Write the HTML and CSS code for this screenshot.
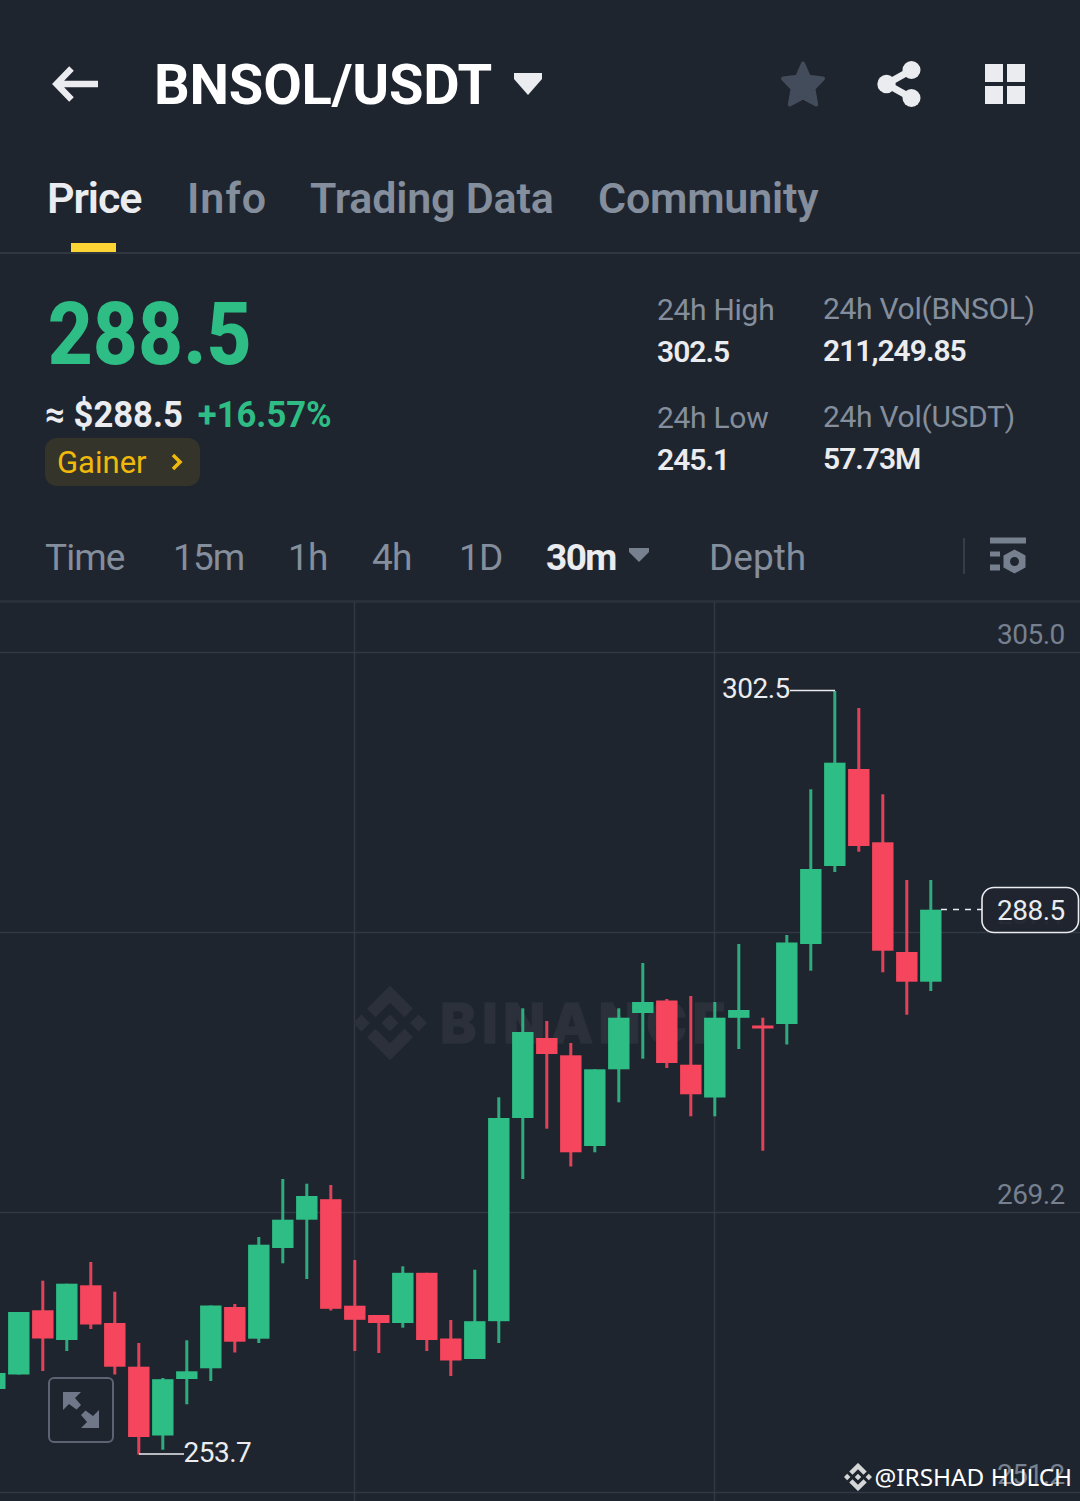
FILE: index.html
```html
<!DOCTYPE html>
<html lang="en">
<head>
    <meta charset="UTF-8">
    <meta name="viewport" content="width=device-width, initial-scale=1.0">
    <title>BNSOL/USDT</title>
    <link rel="stylesheet" href="styles.css">
</head>
<body>
    <header class="header">
        <svg class="back" width="46" height="36" viewBox="0 0 46 36">
            <path d="M19.5 2.5L4.5 18l15 15.5M4 18h42" fill="none" stroke="currentColor" stroke-width="6.4"/>
        </svg>
        <h1>BNSOL/USDT</h1>
        <svg class="caret" width="28" height="22" viewBox="0 0 28 22">
            <path d="M0 0h28v6L14 22 0 6z" fill="currentColor"/>
        </svg>
        <div class="header-icons">
            <svg class="star" width="46" height="48" viewBox="0 0 46 48">
                <path d="M23 3.500l5.800 13.200L43 18.600 33.400 28.600 36.200 44.500 23 37.500 9.800 44.500 12.600 28.600 3 18.600l14.200-1.900z" fill="currentColor" stroke="currentColor" stroke-width="4" stroke-linejoin="round"/>
            </svg>
            <svg width="44" height="46" viewBox="0 0 44 46">
                <path d="M34.500 9L9.500 23l25 14" fill="none" stroke="currentColor" stroke-width="7"/>
                <circle cx="34.500" cy="9" r="9" fill="currentColor"/>
                <circle cx="9.500" cy="23" r="9.200" fill="currentColor"/>
                <circle cx="34.500" cy="37" r="9" fill="currentColor"/>
            </svg>
            <svg width="40" height="40" viewBox="0 0 40 40">
                <path d="M0 0h18v18H0zM22 0h18v18H22zM0 22h18v18H0zM22 22h18v18H22z" fill="currentColor"/>
            </svg>
        </div>
    </header>

    <nav class="tabs">
        <a class="tab active">Price</a>
        <a class="tab info">Info</a>
        <a class="tab">Trading Data</a>
        <a class="tab">Community</a>
    </nav>

    <section class="summary">
        <div class="price-block">
            <div class="price">288.5</div>
            <div class="price-sub"><span>≈ $288.5</span><span class="change">+16.57%</span></div>
            <div class="badge">
                <span>Gainer</span>
                <svg width="12" height="18" viewBox="0 0 12 18">
                    <path d="M2 2l7 7-7 7" fill="none" stroke="currentColor" stroke-width="3.6"/>
                </svg>
            </div>
        </div>
        <div class="stats">
            <div class="stats-col">
                <div class="stat"><div class="label">24h High</div><div class="value">302.5</div></div>
                <div class="stat"><div class="label">24h Low</div><div class="value">245.1</div></div>
            </div>
            <div class="stats-col wide">
                <div class="stat"><div class="label">24h Vol(BNSOL)</div><div class="value">211,249.85</div></div>
                <div class="stat"><div class="label">24h Vol(USDT)</div><div class="value">57.73M</div></div>
            </div>
        </div>
    </section>

    <nav class="intervals">
        <span>Time</span>
        <span>15m</span>
        <span>1h</span>
        <span>4h</span>
        <span>1D</span>
        <span class="selected">30m
            <svg width="20" height="14" viewBox="0 0 20 14"><path d="M0 0h20v4l-10 10L0 4z" fill="currentColor"/></svg>
        </span>
        <span class="depth">Depth</span>
        <div class="divider"></div>
        <svg class="settings" width="36" height="37" viewBox="0 0 36 37">
            <path d="M0 .5h36v6H0zM0 14.500h10v5H0zM0 27.500h10v6H0z" fill="currentColor"/>
            <path fill-rule="evenodd" d="M24.500 12.500l11 6v12l-11 6-11-6v-12zM24.500 20a4.500 4.500 0 1 0 0 9 4.500 4.500 0 1 0 0-9z" fill="currentColor"/>
        </svg>
    </nav>

    <main class="chart">
        <svg class="chart-svg" width="1080" height="899" viewBox="0 602 1080 899">
            <g class="grid">
                <path d="M0 652.500h1080M0 932.500h1080M0 1212.500h1080M0 1492.500h1080M354.500 602v899M714.500 602v899"/>
            </g>

            <!-- watermark -->
            <g class="watermark">
                <g transform="translate(353 986) scale(.587)">
                    <path d="M38.200 53.200L63 28.400l24.800 24.800 14.400-14.400L63 -.4 23.800 38.800zM0 63l14.400-14.400L28.800 63 14.400 77.400zM38.200 72.800L63 97.600l24.800-24.800 14.400 14.400L63 126.400 23.800 87.200zM97.200 63l14.400-14.400L126 63l-14.400 14.400zM77.600 63L63 48.400 48.400 63 63 77.600z"/>
                </g>
                <text x="440" y="1043" textLength="286" lengthAdjust="spacing">BINANCE</text>
            </g>

            <g id="candles"></g>

            <g class="axis">
                <text x="997" y="644">305.0</text>
                <text x="997" y="924">287.1</text>
                <text x="997" y="1204">269.2</text>
                <text x="997" y="1484">251.2</text>
            </g>

            <g class="marks">
                <path d="M790 690.500h45M139 1454h45"/>
                <text x="722" y="698">302.5</text>
                <text x="183.500" y="1462">253.7</text>
            </g>

            <g class="last-price">
                <path d="M941 909.500h41" stroke-dasharray="6 6"/>
                <rect x="982" y="887.500" width="96.500" height="45" rx="12"/>
                <text x="997" y="920">288.5</text>
            </g>
        </svg>

        <button class="expand" aria-label="Expand">
            <svg width="36" height="36" viewBox="0 0 36 36">
                <path d="M0 0h18l-6 6 6 7-4.500 4.500L6 12l-6 6zM36 36H18l6-6-6-7 4.500-4.500L30 24l6-6z" fill="currentColor"/>
            </svg>
        </button>

        <div class="author">
            <svg width="28" height="28" viewBox="0 0 126 126">
                <path fill="currentColor" d="M38.200 53.200L63 28.400l24.800 24.800 14.400-14.400L63 -.4 23.800 38.800zM0 63l14.400-14.400L28.800 63 14.400 77.400zM38.200 72.800L63 97.600l24.800-24.800 14.400 14.400L63 126.400 23.800 87.200zM97.200 63l14.400-14.400L126 63l-14.400 14.400zM77.600 63L63 48.400 48.400 63 63 77.600z"/>
            </svg>
            <span>@IRSHAD HULCH</span>
        </div>
    </main>

    <script src="script.js"></script>
</body>
</html>
```
FILE: styles.css
```css
:root {
    --bg: #1f252f;
    --text: #eaecef;
    --muted: #848e9c;
    --line: #31373f;
    --green: #2ebd85;
    --red: #f6465d;
    --yellow: #fcd535;
}

* {
    margin: 0;
    padding: 0;
    box-sizing: border-box;
}

body {
    width: 1080px;
    font-family: Roboto, sans-serif;
    color: var(--text);
    background-color: var(--bg);
    overflow: hidden;
}

svg {
    display: block;
    flex: none;
}

/* header */
.header {
    display: flex;
    align-items: center;
    height: 170px;
    padding: 0 55px 2px 52px;
}

.header h1 {
    width: 394px;
    padding: 2px 0 0 56px;
    font-size: 56px;
    line-height: 60px;
    font-weight: 700;
    letter-spacing: -0.2px;
    white-space: nowrap;
    color: #fff;
}

.caret {
    margin-left: 22px;
}

.header-icons {
    display: flex;
    align-items: center;
    margin-left: auto;
}

.header-icons svg + svg {
    margin-left: 51px;
}

.header-icons svg:last-child {
    margin-left: 64px;
}

.star {
    color: #434c5a;
}

/* tabs */
.tabs {
    display: grid;
    grid-template-columns: 140px 123px 288px auto;
    height: 84px;
    padding-left: 47px;
    border-bottom: 2px solid var(--line);
}

.tab {
    position: relative;
    justify-self: start;
    font-size: 43px;
    line-height: 56px;
    font-weight: 600;
    letter-spacing: -0.2px;
    color: var(--muted);
}

.tab.info {
    letter-spacing: 1px;
}

.tab.active {
    letter-spacing: -1.1px;
    color: var(--text);
}

.tab.active::after {
    content: "";
    position: absolute;
    left: 24px;
    bottom: 0;
    width: 45px;
    height: 9px;
    background-color: var(--yellow);
}

/* summary */
.summary {
    display: flex;
    justify-content: space-between;
    height: 260px;
    padding: 34px 40px 0 45px;
}

.price {
    padding-left: 3px;
    font-size: 88px;
    line-height: 92px;
    font-weight: 800;
    color: var(--green);
    transform: scaleX(0.89);
    transform-origin: left;
}

.price-sub {
    display: flex;
    gap: 16px;
    margin-top: 12px;
    font-size: 37px;
    line-height: 46px;
    font-weight: 700;
    transform: scaleX(0.935);
    transform-origin: left;
    white-space: nowrap;
}

.change {
    color: var(--green);
}

.badge {
    display: flex;
    align-items: center;
    justify-content: space-between;
    width: 155px;
    height: 48px;
    padding: 0 17px 0 12px;
    border-radius: 12px;
    font-size: 31px;
    background-color: #35342b;
    color: #f0b90b;
}

.stats {
    display: flex;
    margin-top: 1px;
}

.stats-col {
    width: 166px;
}

.stats-col.wide {
    width: 217px;
    margin-top: -1px;
}

.stat {
    height: 108px;
    font-size: 30px;
    line-height: 42px;
    white-space: nowrap;
}

.label {
    color: var(--muted);
    letter-spacing: -0.3px;
}

.value {
    font-weight: 600;
    letter-spacing: -1px;
}

/* intervals */
.intervals {
    display: grid;
    grid-template-columns: 128px 115px 84px 87px 87px 163px 254px 27px 36px;
    align-items: center;
    height: 89px;
    padding: 1px 0 0 45px;
    border-bottom: 3px solid #29303a;
    font-size: 37px;
    letter-spacing: -0.9px;
    color: var(--muted);
}

.intervals .selected {
    display: flex;
    align-items: center;
    gap: 13px;
    font-weight: 700;
    letter-spacing: -1.6px;
    color: var(--text);
}

.intervals .depth {
    letter-spacing: 0;
}

.selected svg {
    margin-top: -6px;
    color: #76808f;
}

.divider {
    width: 2px;
    height: 36px;
    margin-top: -4px;
    background-color: #363d48;
}

.settings {
    margin-top: -4px;
    color: #76808f;
}

/* chart */
.chart {
    position: relative;
    height: 899px;
    margin-top: -1px;
}

.chart text {
    font-size: 28px;
    letter-spacing: -0.5px;
}

.grid path {
    fill: none;
    stroke: #323943;
    stroke-width: 1.5;
}

.watermark {
    fill: #2b303b;
}

.chart .watermark text {
    font-family: Inter, sans-serif;
    font-size: 55px;
    font-weight: 800;
    letter-spacing: 0;
    stroke: #2b303b;
    stroke-width: 1.5;
}

.up {
    fill: var(--green);
}

.down {
    fill: var(--red);
}

.wick {
    opacity: 0.9;
}

.axis {
    fill: #76808f;
}

.marks path,
.last-price path {
    fill: none;
    stroke: var(--text);
    stroke-width: 1.5;
}

.marks text,
.last-price text {
    fill: var(--text);
}

.last-price rect {
    fill: var(--bg);
    fill-opacity: 0.93;
    stroke: var(--text);
    stroke-width: 1.6;
}

.expand {
    position: absolute;
    left: 48px;
    top: 775px;
    display: flex;
    align-items: center;
    justify-content: center;
    width: 66px;
    height: 66px;
    border: 2px solid #5c6474;
    border-radius: 6px;
    background: none;
    color: #6f7788;
}

.author {
    position: absolute;
    right: 8px;
    bottom: 8px;
    display: flex;
    align-items: center;
    gap: 3px;
    font-family: "Noto Sans", sans-serif;
    font-size: 24.300px;
    line-height: 32px;
    white-space: nowrap;
    color: #fff;
}

.author svg {
    color: #d5d6d8;
}
```
FILE: script.js
```js
// [direction, high, body top, body bottom, low]
const candles = [
    ['up', 1373, 1373, 1389, 1389],
    ['up', 1312, 1312, 1374.5, 1374.5],
    ['down', 1280.7, 1310.3, 1338.5, 1371],
    ['up', 1283.7, 1283.7, 1340, 1351],
    ['down', 1262, 1285.3, 1324.5, 1329],
    ['down', 1291.7, 1323, 1366.7, 1374.5],
    ['down', 1343, 1366.7, 1437, 1454.5],
    ['up', 1378, 1379.2, 1435.5, 1449.7],
    ['up', 1340.3, 1371.3, 1379, 1404.3],
    ['up', 1305.5, 1305.5, 1368.3, 1381],
    ['down', 1304, 1307, 1341.7, 1352.5],
    ['up', 1237, 1244.7, 1338.7, 1343],
    ['up', 1179, 1219.7, 1248, 1263.3],
    ['up', 1183.7, 1196, 1219.7, 1279],
    ['down', 1185, 1199.2, 1308.8, 1310.5],
    ['down', 1260, 1305.7, 1319.8, 1351],
    ['down', 1315, 1315, 1323, 1353],
    ['up', 1266.3, 1272.8, 1323, 1327.7],
    ['down', 1272.8, 1272.8, 1340, 1351],
    ['down', 1320, 1338.5, 1360.5, 1376],
    ['up', 1269.7, 1321.2, 1359, 1359],
    ['up', 1097.3, 1118, 1321.2, 1343],
    ['up', 1008.3, 1032, 1118, 1179],
    ['down', 1021, 1038, 1054, 1128.7],
    ['down', 1043, 1055.3, 1152.3, 1166.5],
    ['up', 1069.3, 1069.3, 1146, 1152.3],
    ['up', 1008.3, 1017.7, 1069.3, 1102.3],
    ['up', 963, 1002, 1013, 1058.7],
    ['down', 999, 1000.5, 1063, 1068],
    ['down', 996, 1064.7, 1094.3, 1116.3],
    ['up', 1002, 1017.7, 1097.5, 1116.3],
    ['up', 944, 1010, 1017.8, 1049],
    ['down', 1017.7, 1025.5, 1028.5, 1150.7],
    ['up', 935, 942.5, 1024, 1044.5],
    ['up', 789.3, 869, 944, 970.7],
    ['up', 691, 762.7, 866, 872],
    ['down', 708, 769, 846, 851.7],
    ['down', 794.3, 842.3, 950.7, 972.3],
    ['down', 880, 952, 981.7, 1014.7],
    ['up', 880, 909.7, 981.7, 991]
];

const step = 24;
const bodyWidth = 21.4;
const wickWidth = 3;

const layer = document.getElementById('candles');

function addRect(x, y, width, height, cls) {
    const rect = document.createElementNS('http://www.w3.org/2000/svg', 'rect');
    rect.setAttribute('x', x);
    rect.setAttribute('y', y);
    rect.setAttribute('width', width);
    rect.setAttribute('height', height);
    rect.setAttribute('class', cls);
    layer.appendChild(rect);
}

candles.forEach(([dir, high, top, bottom, low], i) => {
    const x = -5.2 + i * step;
    addRect(x - wickWidth / 2, high, wickWidth, low - high, 'wick ' + dir);
    addRect(x - bodyWidth / 2, top, bodyWidth, bottom - top, dir);
});
```
